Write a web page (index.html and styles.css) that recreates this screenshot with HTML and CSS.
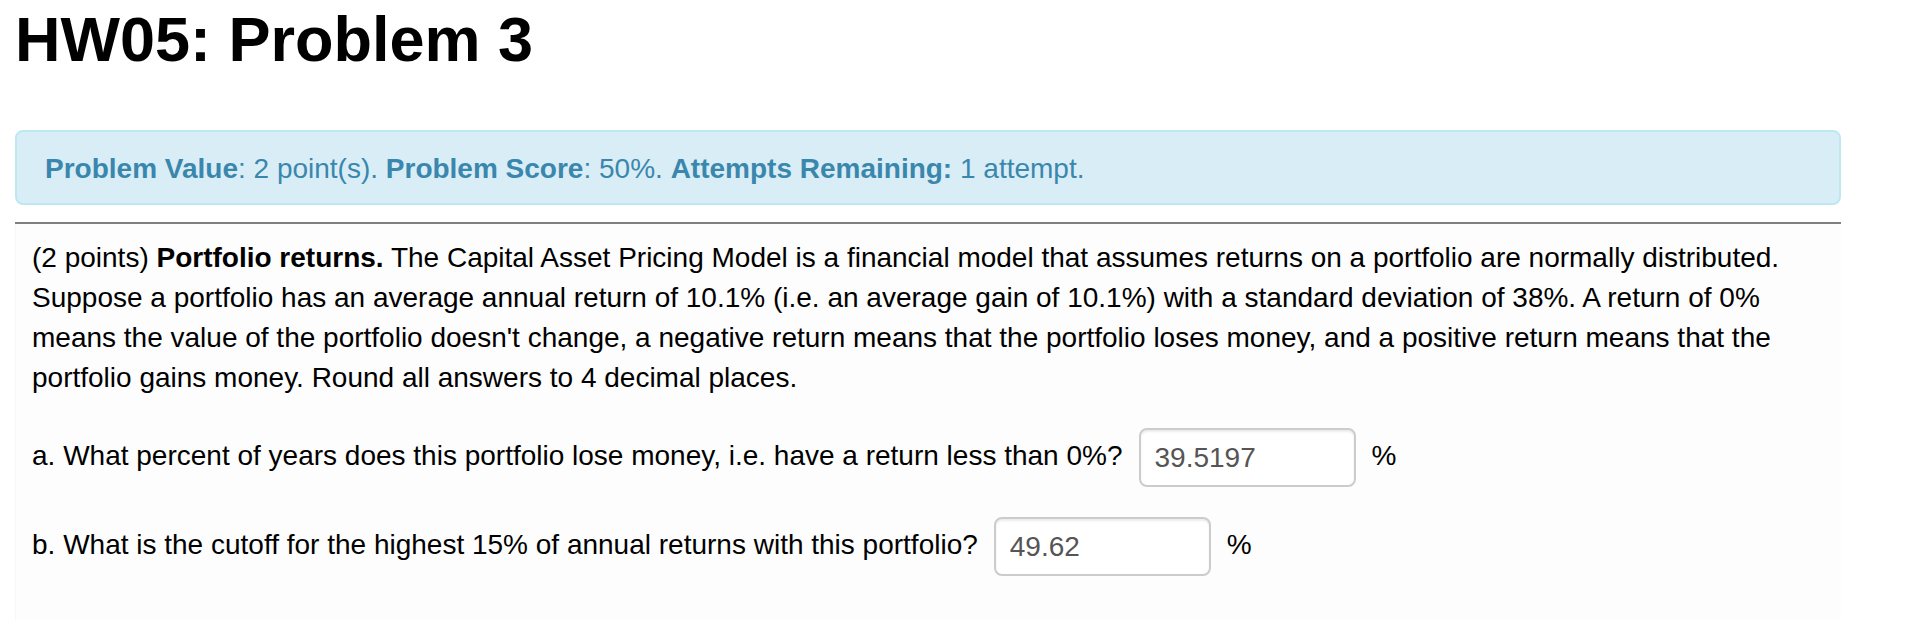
FILE: index.html
```html
<!DOCTYPE html>
<html lang="en">
<head>
    <meta charset="UTF-8">
    <meta name="viewport" content="width=device-width, initial-scale=1.0">
    <title>HW05: Problem 3</title>
    <link rel="stylesheet" href="styles.css">
</head>
<body>
    <div class="page">
        <h2 class="page-title">HW05: Problem 3</h2>

        <div class="alert alert-info">
            <strong>Problem Value</strong>: 2 point(s). <strong>Problem Score</strong>: 50%. <strong>Attempts Remaining:</strong> 1 attempt.
        </div>

        <hr class="divider">

        <div class="problem">
            <p class="problem-text">(2 points) <b>Portfolio returns.</b> The Capital Asset Pricing Model is a financial model that assumes returns on a portfolio are normally distributed. Suppose a portfolio has an average annual return of 10.1% (i.e. an average gain of 10.1%) with a standard deviation of 38%. A return of 0% means the value of the portfolio doesn't change, a negative return means that the portfolio loses money, and a positive return means that the portfolio gains money. Round all answers to 4 decimal places.</p>

            <div class="question">
                <span class="question-text">a. What percent of years does this portfolio lose money, i.e. have a return less than 0%?</span><input class="answer" type="text" id="AnSwEr0001" value="39.5197"><span class="unit">%</span>
            </div>

            <div class="question">
                <span class="question-text">b. What is the cutoff for the highest 15% of annual returns with this portfolio?</span><input class="answer" type="text" id="AnSwEr0002" value="49.62"><span class="unit">%</span>
            </div>
        </div>
    </div>
</body>
</html>
```

FILE: styles.css
```css
body {
    margin: 0;
    font-family: 'Liberation Sans', Arial, sans-serif;
    font-size: 28px;
    line-height: 40px;
    color: #000;
    background-color: #fff;
}

.page {
    margin: 0 64px 0 15px;
}

.page-title {
    margin: 0;
    font-size: 63px;
    line-height: 78px;
    font-weight: bold;
    color: #000;
}

.alert {
    margin-top: 52px;
    padding: 17px 70px 14px 28px;
    border: 2px solid #bce8f1;
    border-radius: 8px;
}

.alert-info {
    background-color: #d9edf7;
    color: #3a87ad;
}

.divider {
    height: 0;
    margin: 17px 0 0;
    border: 0;
    border-top: 2px solid #808080;
}

.problem {
    padding: 14px 16px 44px 16px;
    background-color: #fdfdfd;
    border-left: 1px solid #f7f7f7;
}

.problem-text {
    margin: 0;
}

.question {
    display: flex;
    align-items: center;
    margin-top: 30px;
}

.question-text {
    padding-bottom: 4px;
}

.answer {
    box-sizing: border-box;
    width: 217px;
    height: 59px;
    margin: 0 16px;
    padding: 0 14px;
    font-family: 'Liberation Sans', Arial, sans-serif;
    font-size: 28px;
    color: #555;
    background-color: #fff;
    border: 2px solid #ccc;
    border-radius: 8px;
    box-shadow: inset 0 2px 2px rgba(0, 0, 0, 0.075);
}

.unit {
    padding-bottom: 4px;
}
```
